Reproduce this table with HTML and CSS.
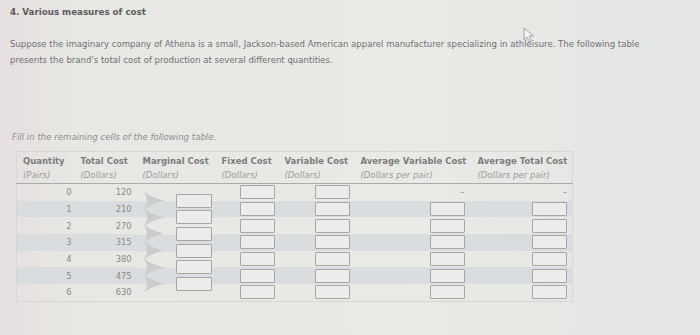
FILE: index.html
```html
<!DOCTYPE html>
<html lang="en">
<head>
  <meta charset="UTF-8">
  <meta name="viewport" content="width=device-width, initial-scale=1.0">
  <title>Various measures of cost</title>
  <link rel="stylesheet" href="styles.css">
</head>
<body>
  <h1 class="title">4. Various measures of cost</h1>

  <p class="intro">
    Suppose the imaginary company of Athena is a small, Jackson-based American apparel manufacturer specializing in athleisure. The following table<br>
    presents the brand's total cost of production at several different quantities.
    <!-- mouse pointer sitting over the text -->
    <svg class="pointer" width="13" height="16" viewBox="0 0 13 16">
      <path d="M1 1 L1 13 L4 10 L6.5 15 L8.5 14 L6 9 L10.5 9 Z" fill="#f4f4f2" stroke="#9a9a9a" stroke-width="0.9"/>
    </svg>
  </p>

  <p class="hint">Fill in the remaining cells of the following table.</p>

  <table class="costs">
    <colgroup>
      <col class="c-q"><col class="c-tc"><col class="c-mc"><col class="c-fc"><col class="c-vc"><col class="c-avc"><col class="c-atc">
    </colgroup>
    <thead>
      <tr>
        <th>Quantity<br><em>(Pairs)</em></th>
        <th>Total Cost<br><em>(Dollars)</em></th>
        <th>Marginal Cost<br><em>(Dollars)</em></th>
        <th>Fixed Cost<br><em>(Dollars)</em></th>
        <th>Variable Cost<br><em>(Dollars)</em></th>
        <th>Average Variable Cost<br><em>(Dollars per pair)</em></th>
        <th>Average Total Cost<br><em>(Dollars per pair)</em></th>
      </tr>
    </thead>
    <tbody>
      <tr>
        <td class="num q">0</td>
        <td class="num tc">120</td>
        <td class="marginal" rowspan="7">
          <div class="steps">
            <div class="step"><svg class="chev" viewBox="0 0 20 17"><path d="M0 0 Q9 6 20 8.5 Q9 11 0 17 Q6 8.5 0 0 Z"/></svg><input class="box" type="text"></div>
            <div class="step"><svg class="chev" viewBox="0 0 20 17"><path d="M0 0 Q9 6 20 8.5 Q9 11 0 17 Q6 8.5 0 0 Z"/></svg><input class="box" type="text"></div>
            <div class="step"><svg class="chev" viewBox="0 0 20 17"><path d="M0 0 Q9 6 20 8.5 Q9 11 0 17 Q6 8.5 0 0 Z"/></svg><input class="box" type="text"></div>
            <div class="step"><svg class="chev" viewBox="0 0 20 17"><path d="M0 0 Q9 6 20 8.5 Q9 11 0 17 Q6 8.5 0 0 Z"/></svg><input class="box" type="text"></div>
            <div class="step"><svg class="chev" viewBox="0 0 20 17"><path d="M0 0 Q9 6 20 8.5 Q9 11 0 17 Q6 8.5 0 0 Z"/></svg><input class="box" type="text"></div>
            <div class="step"><svg class="chev" viewBox="0 0 20 17"><path d="M0 0 Q9 6 20 8.5 Q9 11 0 17 Q6 8.5 0 0 Z"/></svg><input class="box" type="text"></div>
          </div>
        </td>
        <td class="fc"><input class="box" type="text"></td>
        <td class="vc"><input class="box" type="text"></td>
        <td class="avc dash">&ndash;</td>
        <td class="atc dash">&ndash;</td>
      </tr>
      <tr class="shade">
        <td class="num q">1</td><td class="num tc">210</td>
        <td class="fc"><input class="box" type="text"></td><td class="vc"><input class="box" type="text"></td>
        <td class="avc"><input class="box" type="text"></td><td class="atc"><input class="box" type="text"></td>
      </tr>
      <tr>
        <td class="num q">2</td><td class="num tc">270</td>
        <td class="fc"><input class="box" type="text"></td><td class="vc"><input class="box" type="text"></td>
        <td class="avc"><input class="box" type="text"></td><td class="atc"><input class="box" type="text"></td>
      </tr>
      <tr class="shade">
        <td class="num q">3</td><td class="num tc">315</td>
        <td class="fc"><input class="box" type="text"></td><td class="vc"><input class="box" type="text"></td>
        <td class="avc"><input class="box" type="text"></td><td class="atc"><input class="box" type="text"></td>
      </tr>
      <tr>
        <td class="num q">4</td><td class="num tc">380</td>
        <td class="fc"><input class="box" type="text"></td><td class="vc"><input class="box" type="text"></td>
        <td class="avc"><input class="box" type="text"></td><td class="atc"><input class="box" type="text"></td>
      </tr>
      <tr class="shade">
        <td class="num q">5</td><td class="num tc">475</td>
        <td class="fc"><input class="box" type="text"></td><td class="vc"><input class="box" type="text"></td>
        <td class="avc"><input class="box" type="text"></td><td class="atc"><input class="box" type="text"></td>
      </tr>
      <tr>
        <td class="num q">6</td><td class="num tc">630</td>
        <td class="fc"><input class="box" type="text"></td><td class="vc"><input class="box" type="text"></td>
        <td class="avc"><input class="box" type="text"></td><td class="atc"><input class="box" type="text"></td>
      </tr>
    </tbody>
  </table>
</body>
</html>
```

FILE: styles.css
```css
/* Page */
body {
  margin: 0;
  padding: 5px 10px;
  font-family: "DejaVu Sans", Verdana, sans-serif;
  font-size: 8.55px;
  color: #707070;
  background: linear-gradient(to right, #e6dfdf 0, #e7e8e4 12%, #e8eae6 60%, #e4e6e3 100%);
  height: 335px;
  box-sizing: border-box;
  overflow: hidden;
}

.title {
  margin: 0;
  font-size: 8.7px;
  line-height: 14px;
  color: #5c5c5c;
}

.intro {
  position: relative;
  margin: 17px 0 0 0;
  line-height: 16px;
}

/* cursor drawn over the paragraph */
.pointer {
  position: absolute;
  left: 513px;
  top: -9px;
}

.hint {
  margin: 62px 0 0 2px;
  line-height: 14px;
  font-size: 8.6px;
  font-style: italic;
  color: #8e8e8e;
}

/* Cost table */
.costs {
  margin: 7px 0 0 6px;
  border-collapse: collapse;
  table-layout: fixed;
  width: 556px;
  border: 1px solid #d6d8d4;
}
.c-q   { width: 58px; }
.c-tc  { width: 62px; }
.c-mc  { width: 79px; }
.c-fc  { width: 63px; }
.c-vc  { width: 76px; }
.c-avc { width: 117px; }
.c-atc { width: 101px; }

.costs th {
  padding: 2px 0 1px 6px;
  text-align: left;
  font-size: 8.5px;
  line-height: 14px;
  font-weight: bold;
  color: #7c7c7c;
  white-space: nowrap;
  border-bottom: 1px solid #a9aba8;
}
.costs th em {
  font-weight: normal;
  color: #9b9b9b;
}

.costs td {
  height: 16.67px;
  padding: 0;
  text-align: right;
  vertical-align: middle;
  color: #8a8a8a;
  font-size: 8.3px;
  line-height: 10px;
}
.costs tr.shade td { background: #d9dde0; }

.q   { padding-right: 3px !important; }
.tc  { padding-right: 5px !important; }
.fc  { padding-right: 4px !important; }
.vc  { padding-right: 5px !important; }
.avc { padding-right: 7px !important; }
.atc { padding-right: 5px !important; }
.dash { color: #999; }

/* input fields */
.box {
  display: block;
  margin-left: auto;
  width: 35px;
  height: 14px;
  box-sizing: border-box;
  border: 1px solid #a6a7a5;
  border-radius: 1px;
  background: #ecedea;
  padding: 0;
}

/* marginal cost column: one entry between each pair of rows */
.costs td.marginal {
  vertical-align: top;
  padding: 0;
  background: repeating-linear-gradient(to bottom, transparent 0, transparent 16.67px, #d9dde0 16.67px, #d9dde0 33.34px);
}
.steps {
  display: flex;
  flex-direction: column;
  padding-top: 8.33px;
}
.step {
  display: flex;
  align-items: center;
  height: 16.67px;
  padding: 0 4px 0 7px;
}
.chev {
  width: 20px;
  height: 17px;
  fill: #cbcdcc;
}
.step .box {
  margin-left: auto;
  width: 36px;
}
```
